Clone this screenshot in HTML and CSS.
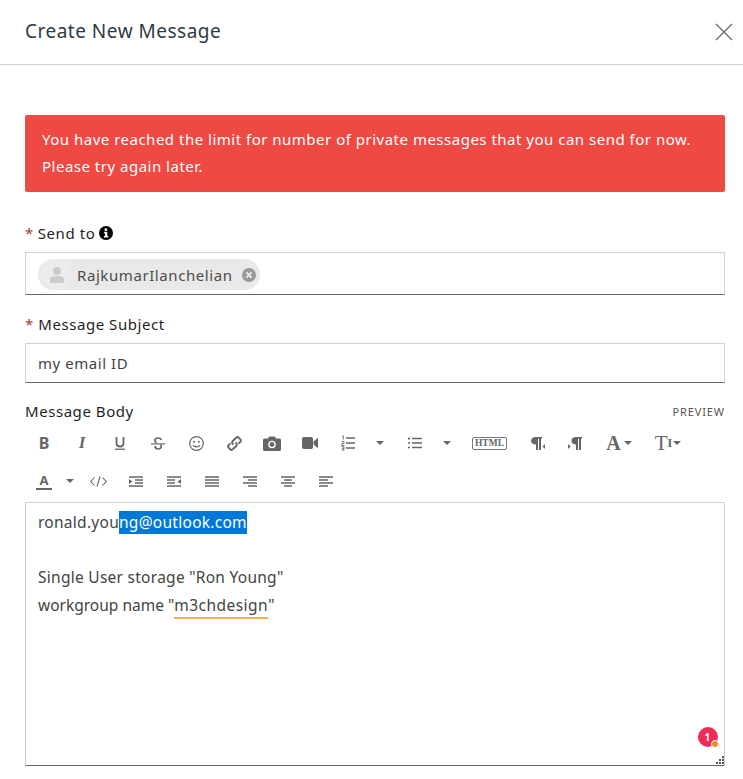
FILE: index.html
```html
<!DOCTYPE html>
<html lang="en">
<head>
<meta charset="utf-8">
<title>Create New Message</title>
<link rel="stylesheet" href="styles.css">
</head>
<body>
<div class="dialog">
  <header class="head">
    <h1 class="title">Create New Message</h1>
    <svg class="close" width="18" height="18" viewBox="0 0 18 18"><path d="M1 1l16 16M17 1L1 17" stroke="#6b6b6b" stroke-width="1.3" fill="none"/></svg>
  </header>
  <main class="form">
    <div class="alert">You have reached the limit for number of private messages that you can send for now.<br>Please try again later.</div>

    <div class="label label-send"><span class="req">*</span> Send to
      <svg class="info" width="14" height="14" viewBox="0 0 14 14"><circle cx="7" cy="7" r="7" fill="#000"/><path d="M5.600 2.600h2.600v2.200H5.600zM4.900 5.800h3.400v4.100h1v1.500H4.900V9.900h1V7.300h-1z" fill="#fff"/></svg>
    </div>
    <div class="field field-to">
      <span class="chip">
        <span class="avatar"><svg width="16" height="18" viewBox="0 0 16 18"><circle cx="8" cy="5" r="4" fill="#ccc"/><path d="M1 17v-3.500C1 11 3.500 10 8 10s7 1 7 3.500V17z" fill="#ccc"/></svg></span>
        <span class="chip-name">RajkumarIlanchelian</span>
        <svg class="chip-x" width="14" height="14" viewBox="0 0 14 14"><circle cx="7" cy="7" r="7" fill="#999"/><path d="M4.400 4.400l5.200 5.200M9.600 4.400l-5.200 5.200" stroke="#e9e9e9" stroke-width="2"/></svg>
      </span>
    </div>

    <div class="label label-subject"><span class="req">*</span> Message Subject</div>
    <div class="field field-subject">my email ID</div>

    <div class="body-head">
      <span class="label">Message Body</span>
      <span class="preview">PREVIEW</span>
    </div>

    <div class="toolbar">
      <span class="tool"><span class="g-b">B</span></span>
      <span class="tool"><span class="g-i">I</span></span>
      <span class="tool"><svg width="10" height="13" viewBox="0 0 10 13"><path d="M1.500 0v6.500c0 4 7 4 7 0V0" fill="none" stroke="#666" stroke-width="1.800"/><path d="M0 12.200h10" stroke="#666" stroke-width="1.300"/></svg></span>
      <span class="tool"><svg width="14" height="13" viewBox="0 0 14 13"><path d="M10.500 2.800C9.700 1.300 8.500 1 7 1 5.200 1 3.800 1.800 3.800 3.400c0 1.100.800 1.800 1.900 2.300M4.200 9c0 1.800 1.100 3 2.800 3 1.900 0 3.300-.900 3.300-2.500 0-.800-.300-1.400-.800-1.900" fill="none" stroke="#666" stroke-width="1.700"/><path d="M0 6.900h14" stroke="#666" stroke-width="1.200"/></svg></span>
      <span class="tool"><svg width="15" height="15" viewBox="0 0 15 15"><circle cx="7.500" cy="7.500" r="6.800" fill="none" stroke="#666" stroke-width="1.200"/><circle cx="5.200" cy="5.700" r="1" fill="#666"/><circle cx="9.800" cy="5.700" r="1" fill="#666"/><path d="M4 9c1 2.600 6 2.600 7 0" fill="none" stroke="#666" stroke-width="1.200"/></svg></span>
      <span class="tool"><svg width="15" height="15" viewBox="0 0 15 15"><g fill="none" stroke="#666" stroke-width="1.900"><path d="M6.500 8.500L5.800 7.800a2 2 0 0 1 0-2.800L9 1.800a2 2 0 0 1 2.800 0l1.400 1.400a2 2 0 0 1 0 2.800L11.500 7.700"/><path d="M8.500 6.500l.7.700a2 2 0 0 1 0 2.800L6 13.200a2 2 0 0 1-2.800 0L1.800 11.800a2 2 0 0 1 0-2.800L3.500 7.300"/></g></svg></span>
      <span class="tool"><svg width="18" height="15" viewBox="0 0 18 15"><path d="M1.500 2.500H5L6.300.5h5.400L13 2.500h3.500c.8 0 1.500.7 1.500 1.500v9.500c0 .8-.7 1.500-1.500 1.500h-15C.7 15 0 14.300 0 13.500V4c0-.8.700-1.500 1.500-1.500z" fill="#666"/><circle cx="9" cy="8.500" r="3.800" fill="#fff"/><circle cx="9" cy="8.500" r="2.400" fill="#666"/></svg></span>
      <span class="tool"><svg width="16" height="12" viewBox="0 0 16 12"><rect width="11" height="12" rx="2" fill="#666"/><path d="M11.500 4.500L16 .8v10.400l-4.500-3.700z" fill="#666"/></svg></span>
      <span class="tool"><svg width="14" height="16" viewBox="0 0 14 16"><path d="M5 3h9M5 8h9M5 13h9" stroke="#666" stroke-width="1.300"/><path d="M1 1h1.400v3.500M.5 6.500h2.500v2H.8v2h2.500M.5 11.800h2.500v3.200H.5M1 13.400h2" fill="none" stroke="#666" stroke-width=".9"/></svg></span>
      <span class="tool tool-caret"><span class="caret"></span></span>
      <span class="tool tool-ul"><svg width="14" height="12" viewBox="0 0 14 12"><path d="M4 1.500h10M4 6h10M4 10.500h10" stroke="#666" stroke-width="1.300"/><path d="M0 .8h2v1.600H0zM0 5.200h2v1.600H0zM0 9.700h2v1.600H0z" fill="#666"/></svg></span>
      <span class="tool tool-caret"><span class="caret"></span></span>
      <span class="tool tool-html"><span class="g-html">HTML</span></span>
      <span class="tool tool-para"><svg width="14" height="13" viewBox="0 0 14 13"><path d="M5 0h6v1.800h-1V13H8V1.800H7V13H5V7.500C2 7.500 0 6 0 3.700S2 0 5 0z" fill="#666"/><path d="M14 7v5l-2.500-2.500z" fill="#666"/></svg></span>
      <span class="tool tool-para"><svg width="14" height="13" viewBox="0 0 14 13"><path d="M8 0h6v1.800h-1V13h-2V1.800h-1V13H8V7.500C5 7.500 3.500 6 3.500 3.700S5 0 8 0z" fill="#666"/><path d="M0 7v5l2.500-2.500z" fill="#666"/></svg></span>
      <span class="tool tool-font"><span class="g-a">A</span><span class="caret"></span></span>
      <span class="tool tool-size"><span class="g-t">T</span><span class="g-cursor">I</span><span class="caret"></span></span>
    </div>

    <div class="toolbar toolbar-2">
      <span class="tool tool-color"><span class="g-color">A</span></span>
      <span class="tool tool-caret-2"><span class="caret"></span></span>
      <span class="tool tool-code"><svg width="17" height="11" viewBox="0 0 17 11"><path d="M4.500 1.500L.8 5.500l3.700 4M12.500 1.500l3.700 4-3.700 4M10 .5L7 10.500" fill="none" stroke="#666" stroke-width="1.100"/></svg></span>
      <span class="tool"><svg width="14" height="11" viewBox="0 0 14 11"><path d="M0 1h14M6 4h8M6 7h8M0 10h14" stroke="#666" stroke-width="1.600"/><path d="M0 3v5l3.500-2.500z" fill="#666"/></svg></span>
      <span class="tool"><svg width="14" height="11" viewBox="0 0 14 11"><path d="M0 1h14M0 4h8M0 7h8M0 10h14" stroke="#666" stroke-width="1.600"/><path d="M14 3v5l-3.500-2.500z" fill="#666"/></svg></span>
      <span class="tool"><svg width="14" height="11" viewBox="0 0 14 11"><path d="M0 1h14M0 4h14M0 7h14M0 10h14" stroke="#666" stroke-width="1.600"/></svg></span>
      <span class="tool"><svg width="14" height="11" viewBox="0 0 14 11"><path d="M0 1h14M5 4h9M0 7h14M5 10h9" stroke="#666" stroke-width="1.600"/></svg></span>
      <span class="tool"><svg width="14" height="11" viewBox="0 0 14 11"><path d="M0 1h14M3 4h8M0 7h14M3 10h8" stroke="#666" stroke-width="1.600"/></svg></span>
      <span class="tool"><svg width="14" height="11" viewBox="0 0 14 11"><path d="M0 1h14M0 4h9M0 7h14M0 10h9" stroke="#666" stroke-width="1.600"/></svg></span>
    </div>

    <div class="editor">
      <div class="line">ronald.you<span class="sel">ng@outlook.com</span></div>
      <div class="line">&nbsp;</div>
      <div class="line">Single User storage "Ron Young"</div>
      <div class="line"><span class="tight">workgroup name "</span><span class="mark">m3chdesign</span>"</div>
      <span class="badge">1<span class="badge-dot"></span></span>
      <svg class="grip" width="10" height="10" viewBox="0 0 10 10"><path d="M8 0h2v2H8zM5 3h2v2H5zM8 3h2v2H8zM2 6h2v2H2zM5 6h2v2H5zM8 6h2v2H8z" fill="#555" transform="translate(0 1)"/></svg>
    </div>
  </main>
</div>
</body>
</html>
```

FILE: styles.css
```css
* { box-sizing: border-box; }
html, body { margin: 0; padding: 0; background: #fff; }
body { font-family: "Noto Sans", "Open Sans", sans-serif; color: #3c3c3c; overflow: hidden; height: 779px; }
.dialog { width: 743px; }
.head { height: 65px; border-bottom: 1px solid #cfcfcf; display: flex; align-items: center; justify-content: space-between; padding: 0 10px 3px 25px; }
.title { margin: 0; font-size: 19px; font-weight: 400; color: #2f3a42; letter-spacing: .5px; }
.close { display: block; margin-top: 3px; }
.form { padding: 50px 18px 0 25px; }
.alert { height: 77px; background: #ee4a43; border-radius: 2px; color: #fff; padding: 11px 17px; font-size: 15px; line-height: 27px; letter-spacing: .5px; }
.label { font-size: 15px; line-height: 20px; color: #1f1f1f; letter-spacing: .55px; }
.label-send { margin-top: 31px; display: flex; align-items: center; gap: 4px; }
.label-subject { margin-top: 19px; }
.req { color: #a5423f; }
.info { display: block; }
.field { border: 1px solid #d2d2d2; border-bottom: 1px solid #666; border-radius: 1px; }
.field-to { margin-top: 9px; height: 43px; padding: 6px 12px; }
.chip { display: inline-flex; align-items: center; height: 31px; background: #e9e9e9; border-radius: 16px; padding-right: 4px; }
.avatar { width: 31px; height: 31px; margin-left: 3px; border-radius: 50%; display: flex; align-items: center; justify-content: center; background: #ececec; }
.chip-name { margin-left: 5px; font-size: 15px; color: #4d4d4d; letter-spacing: .58px; }
.chip-x { margin-left: 9px; display: block; }
.field-subject { margin-top: 9px; height: 40px; padding: 0 12px; font-size: 15px; line-height: 38px; color: #444; letter-spacing: .55px; }
.body-head { margin-top: 18px; display: flex; justify-content: space-between; align-items: center; }
.preview { font-size: 11px; color: #555; letter-spacing: .9px; }
.toolbar { display: flex; align-items: center; height: 38px; margin-top: 3px; }
.toolbar-2 { margin-top: 0; }
.tool { width: 38px; height: 38px; flex: none; display: flex; align-items: center; justify-content: center; }
.tool-caret { width: 26px; }
.tool-ul { margin-left: 3px; }
.tool-html { width: 59px; }
.tool-para { width: 37px; }
.tool-font { width: 38px; gap: 3px; margin-left: 7px; }
.tool-size { width: 60px; }
.tool-color { width: 38px; }
.tool-caret-2 { width: 14px; }
.tool-code { margin-left: 2px; width: 38px; }
.caret { display: block; width: 0; height: 0; border-left: 4px solid transparent; border-right: 4px solid transparent; border-top: 4px solid #666; }
.g-b { font: 700 16px "Noto Sans", sans-serif; color: #666; }
.g-i { font: italic 700 17px "Liberation Serif", serif; color: #666; }
.g-html { font: 700 9.500px/11px "Liberation Serif", serif; color: #666; border: 1px solid #777; border-radius: 2px; padding: 0 1px; width: 35px; text-align: center; }
.g-a { font: 700 20px "Liberation Serif", serif; color: #666; }
.g-t { font: 400 21px "Liberation Serif", serif; color: #666; }
.g-cursor { font: 700 12px "Liberation Serif", serif; color: #666; margin-right: 1px; }
.g-color { font: 700 13px/15px "Noto Sans", sans-serif; color: #666; border-bottom: 2px solid #666; width: 16px; text-align: center; }
.editor { position: relative; margin-top: 2px; width: 700px; height: 264px; border: 1px solid #cfcfcf; border-bottom: 1px solid #666; border-radius: 1px; padding: 6px 12px; font-size: 15.500px; line-height: 27.600px; color: #444; letter-spacing: .27px; }
.tight { letter-spacing: 0; }
.sel { background: #0078d7; color: #fff; display: inline-block; line-height: 23px; }
.mark { display: inline-block; line-height: 23px; border-bottom: 2px solid #f2b04b; letter-spacing: .47px; }
.badge { position: absolute; right: 6px; bottom: 18px; width: 20px; height: 20px; border-radius: 50%; background: #ef2b56; color: #fff; font-size: 10px; font-weight: 700; line-height: 20px; text-align: center; padding-right: 1px; }
.badge-dot { position: absolute; right: -1px; bottom: -1px; width: 8px; height: 8px; border-radius: 50%; background: #f6851f; border: 1px solid #fff; }
.grip { position: absolute; right: 0; bottom: 0; display: block; }
```
